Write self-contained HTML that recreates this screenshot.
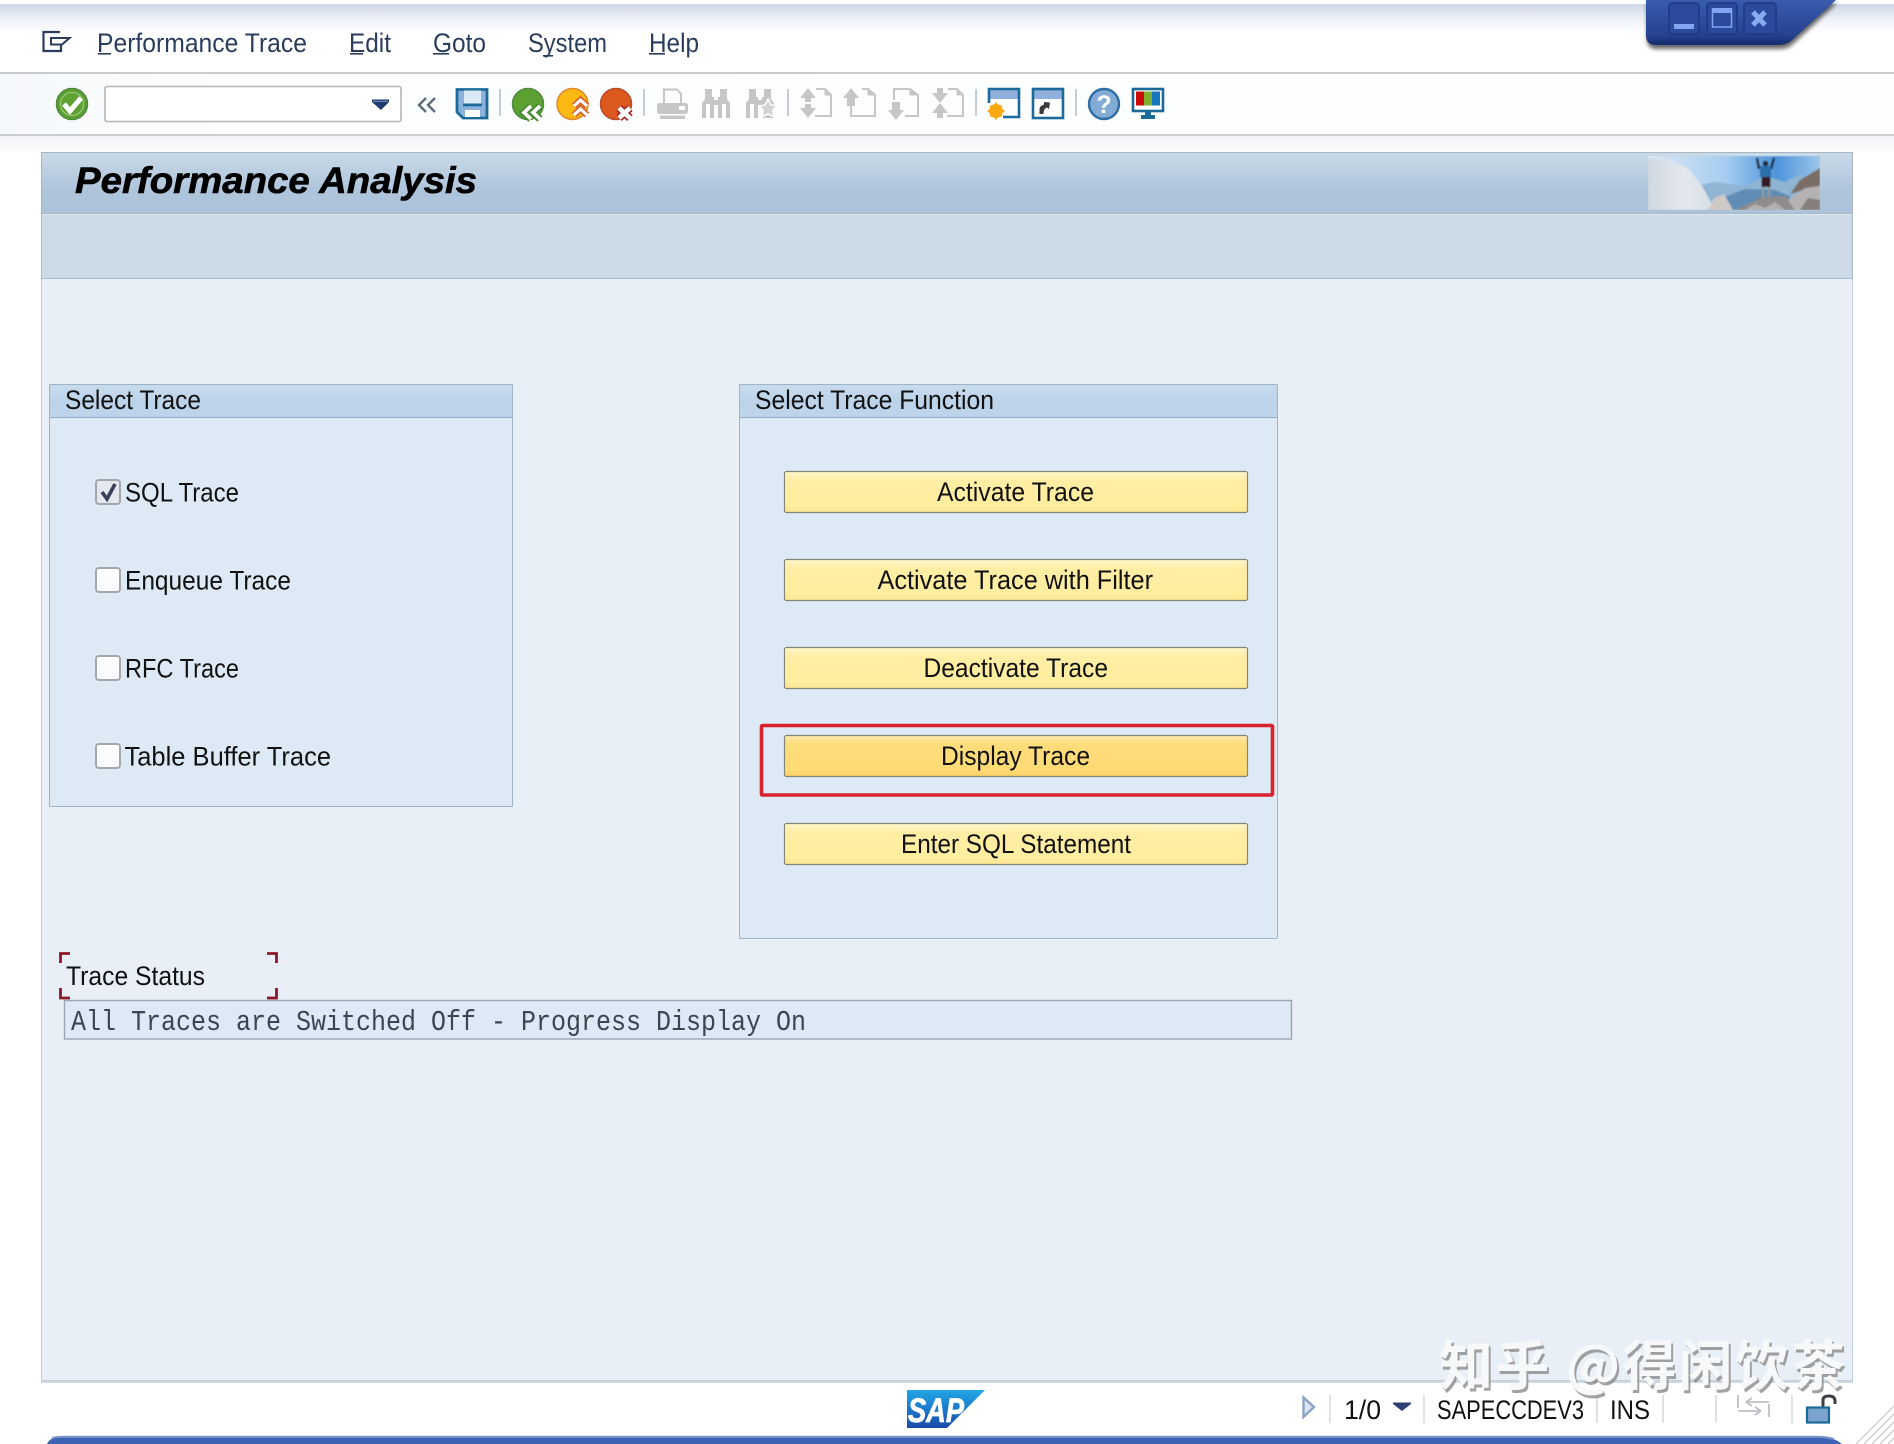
<!DOCTYPE html>
<html lang="en">
<head>
<meta charset="utf-8">
<title>Performance Analysis</title>
<style>
html,body{margin:0;padding:0;background:#fff;width:1894px;height:1444px;overflow:hidden}
svg{display:block}
text{font-family:"Liberation Sans","Noto Sans CJK SC",sans-serif;font-size:27px;fill:#111}
.m{fill:#2a3d5c}
.g{fill:#c6c6c6}
.gs{fill:none;stroke:#c6c6c6;stroke-width:2}
.bl{fill:none;stroke:#1c6a9a;stroke-width:2.6}
.sep{stroke:#c4ccd4;stroke-width:2}
</style>
</head>
<body>
<svg width="1894" height="1444" viewBox="0 0 1894 1444" xmlns="http://www.w3.org/2000/svg">
<defs>
<linearGradient id="top" x1="0" y1="0" x2="0" y2="1"><stop offset="0" stop-color="#cfd8e6"/><stop offset=".5" stop-color="#eef1f7"/><stop offset="1" stop-color="#fff"/></linearGradient>
<linearGradient id="tb" x1="0" y1="0" x2="1" y2="0"><stop offset="0" stop-color="#f5f8fb"/><stop offset=".12" stop-color="#fcfdfe"/><stop offset="1" stop-color="#fefefe"/></linearGradient>
<linearGradient id="gap" x1="0" y1="0" x2="0" y2="1"><stop offset="0" stop-color="#f2f4f8"/><stop offset="1" stop-color="#fbfcfd"/></linearGradient>
<linearGradient id="title" x1="0" y1="0" x2="0" y2="1"><stop offset="0" stop-color="#c9dae8"/><stop offset=".65" stop-color="#aec4db"/><stop offset="1" stop-color="#adc3da"/></linearGradient>
<linearGradient id="ph" x1="0" y1="0" x2="0" y2="1"><stop offset="0" stop-color="#c9dcee"/><stop offset=".5" stop-color="#bcd3e9"/><stop offset="1" stop-color="#bdd4ea"/></linearGradient>
<linearGradient id="btn" x1="0" y1="0" x2="0" y2="1"><stop offset="0" stop-color="#fff6cf"/><stop offset=".2" stop-color="#ffeea4"/><stop offset=".85" stop-color="#ffee9f"/><stop offset="1" stop-color="#fde690"/></linearGradient>
<linearGradient id="btn2" x1="0" y1="0" x2="0" y2="1"><stop offset="0" stop-color="#ffeab0"/><stop offset=".2" stop-color="#ffdd7c"/><stop offset=".85" stop-color="#ffdb74"/><stop offset="1" stop-color="#f9cf62"/></linearGradient>
<linearGradient id="navy" x1="0" y1="0" x2="0" y2="1"><stop offset="0" stop-color="#3a5cae"/><stop offset=".8" stop-color="#24418e"/><stop offset="1" stop-color="#132a6c"/></linearGradient>
<linearGradient id="sky" x1="0" y1="0" x2="1" y2="0"><stop offset="0" stop-color="#dce7f2"/><stop offset=".45" stop-color="#a6cdf1"/><stop offset=".75" stop-color="#4e95db"/><stop offset="1" stop-color="#9cc4e8"/></linearGradient>
<linearGradient id="sap" x1="0" y1="0" x2="0" y2="1"><stop offset="0" stop-color="#22a6e4"/><stop offset=".55" stop-color="#1a75c8"/><stop offset="1" stop-color="#1a4aa6"/></linearGradient>
<linearGradient id="chk" x1="0" y1="0" x2="0" y2="1"><stop offset="0" stop-color="#fff"/><stop offset="1" stop-color="#f6f8fb"/></linearGradient>
<linearGradient id="mt" x1="0" y1="0" x2="1" y2="0"><stop offset="0" stop-color="#d0d7e0"/><stop offset=".5" stop-color="#e3e8ee"/><stop offset="1" stop-color="#d4dbe3"/></linearGradient>
<clipPath id="scene"><rect x="1648" y="156" width="172" height="54"/></clipPath>
<filter id="bl" x="-5%" y="-5%" width="110%" height="110%"><feGaussianBlur stdDeviation=".8"/></filter>
<filter id="sh" x="-10%" y="-10%" width="120%" height="140%"><feGaussianBlur stdDeviation="2"/></filter>
</defs>

<!-- window background -->
<rect width="1894" height="1444" fill="#fff"/>
<rect x="0" y="4" width="1894" height="30" fill="url(#top)"/>
<rect x="0" y="0" width="1894" height="4" fill="#fff"/>
<rect x="0" y="74" width="1894" height="60" fill="url(#tb)"/>
<rect x="0" y="72" width="1894" height="2" fill="#c9cbcd"/>
<rect x="0" y="134" width="1894" height="2" fill="#cbcdd0"/>
<rect x="0" y="136" width="1894" height="16" fill="url(#gap)"/>

<!-- window buttons -->
<path d="M1646 0H1836L1792 41Q1788 45 1780 46H1656Q1646 46 1646 36Z" fill="#000" opacity=".6" filter="url(#sh)" transform="translate(1 3)"/>
<path d="M1646 0H1836L1792 40Q1788 44 1780 45H1656Q1646 45 1646 35Z" fill="url(#navy)"/>
<g fill="#2c4a9c" stroke="#1d3781" stroke-width="1.5">
<rect x="1669" y="3" width="30" height="31" rx="3"/>
<rect x="1707" y="3" width="30" height="31" rx="3"/>
<rect x="1744" y="3" width="32" height="31" rx="3"/>
</g>
<rect x="1674" y="24" width="20" height="5" fill="#7fa6ee"/>
<rect x="1712.5" y="9" width="19" height="18" fill="none" stroke="#7fa6ee" stroke-width="1.5"/>
<rect x="1712" y="8" width="20" height="5" fill="#7fa6ee"/>
<path d="M1753 12L1765 25M1765 12L1753 25" stroke="#86abf0" stroke-width="5"/>

<!-- menu -->
<path d="M60 32H43.5V51H61V45" fill="none" stroke="#2a3d5c" stroke-width="2.2"/>
<path d="M51 38H69.5L62 44.5H51Z" fill="none" stroke="#2a3d5c" stroke-width="2"/>
<text class="m" x="97" y="52" textLength="210" lengthAdjust="spacingAndGlyphs">Performance Trace</text>
<text class="m" x="349" y="52" textLength="42" lengthAdjust="spacingAndGlyphs">Edit</text>
<text class="m" x="433" y="52" textLength="53" lengthAdjust="spacingAndGlyphs">Goto</text>
<text class="m" x="528" y="52" textLength="79" lengthAdjust="spacingAndGlyphs">System</text>
<text class="m" x="649" y="52" textLength="50" lengthAdjust="spacingAndGlyphs">Help</text>
<g fill="#2a3d5c">
<rect x="98" y="53" width="13" height="1.6"/>
<rect x="350" y="53" width="13" height="1.6"/>
<rect x="433" y="53" width="16" height="1.6"/>
<rect x="543" y="55" width="10" height="1.6"/>
<rect x="649" y="53" width="16" height="1.6"/>
</g>

<!-- toolbar -->
<circle cx="72" cy="104" r="15.5" fill="#5da132" stroke="#4a8a35" stroke-width="1.5"/>
<circle cx="72" cy="104" r="11.5" fill="none" stroke="#a4cc86" stroke-width="1"/>
<path d="M64 104L70 111L81 98" fill="none" stroke="#fff" stroke-width="5"/>

<rect x="105" y="86.5" width="296" height="35" rx="2" fill="#fff" stroke="#b3b5b8" stroke-width="1.6"/>
<path d="M372 99.500H389V102L381 110L372 102Z" fill="#1f3a70"/>
<rect x="373" y="100.800" width="15" height="1.200" fill="#6f86ad"/>

<path d="M426 98L419 105L426 112M435 98L428 105L435 112" fill="none" stroke="#5e6b7a" stroke-width="2.4"/>

<!-- save -->
<path d="M457 89.5H487V118H463L457 112Z" fill="#8ab2da" stroke="#1c6a9a" stroke-width="2.8"/>
<rect x="464" y="90.500" width="17" height="13" fill="#dbe8f5"/>
<rect x="463" y="103.500" width="19" height="2.800" fill="#1c6a9a"/>
<rect x="465" y="110" width="15" height="7" fill="#fff"/>

<line class="sep" x1="500" y1="89" x2="500" y2="116"/>

<!-- back -->
<circle cx="528" cy="104" r="15.5" fill="#5da132" stroke="#4f8a3d" stroke-width="1.5"/>
<path d="M531 106L524 112.5L531 119M540 106L533 112.5L540 119" fill="none" stroke="#4a8a35" stroke-width="7.5"/>
<path d="M531 106L524 112.5L531 119M540 106L533 112.5L540 119" fill="none" stroke="#fff" stroke-width="3.6"/>
<!-- exit -->
<circle cx="572.5" cy="104" r="15.5" fill="#fdb913" stroke="#e0882a" stroke-width="1.5"/>
<path d="M574 106L580.500 100L587 106M574 115L580.500 109L587 115" fill="none" stroke="#d9602a" stroke-width="6.500"/>
<path d="M574 106L580.500 100L587 106M574 115L580.500 109L587 115" fill="none" stroke="#fff" stroke-width="3.200"/>
<!-- cancel -->
<circle cx="616" cy="104" r="15.5" fill="#dc5a1e" stroke="#b94a26" stroke-width="1.5"/>
<path d="M619 108L630 118M630 108L619 118" stroke="#a52a2a" stroke-width="8"/>
<path d="M619 108L630 118M630 108L619 118" stroke="#fff" stroke-width="4.6"/>

<line class="sep" x1="644" y1="89" x2="644" y2="116"/>

<!-- print -->
<path d="M664 104V89.500H677L681 94V104" class="gs"/>
<rect x="657" y="103" width="31" height="11" rx="2.500" class="g"/>
<rect x="679" y="106" width="6" height="4" fill="#fff"/>
<rect x="660" y="115.500" width="25" height="3.500" class="g"/>

<!-- binoculars -->
<path d="M705 89H712V97H714V100H718V97H720V89H727V99L730 103V118H718V105H714V118H702V103L705 99Z" class="g"/>
<rect x="706" y="104" width="4" height="14" fill="#fff"/>
<rect x="722" y="104" width="4" height="14" fill="#fff"/>
<path d="M749 89H756V97H758V100H762V97H764V89H771V99L774 103V118H762V105H758V118H746V103L749 99Z" class="g"/>
<rect x="750" y="104" width="4" height="14" fill="#fff"/>
<path d="M768 99L771 105L777 106L773 110L774 117L768 114L762 117L763 110L759 106L765 105Z" fill="#d4d4d4" stroke="#fff" stroke-width="1.500"/>

<line class="sep" x1="788" y1="89" x2="788" y2="116"/>

<!-- paging -->
<path d="M816 89H825L831 95V116H815" class="gs"/><path d="M825 89V95H831" fill="#c6c6c6" stroke="#c6c6c6"/>
<path d="M808 88L816 98H811V102H805V98H800ZM805 104H811V108H816L808 118L800 108H805Z" class="g"/>
<path d="M862 89H868L875 95V116H851V100" class="gs"/><path d="M868 89V95H875" fill="#c6c6c6" stroke="#c6c6c6"/>
<path d="M851 88L859 98H855V106H847V98H843Z" class="g"/>
<path d="M894 100V89H910L918 95V116H905" class="gs"/><path d="M910 89V95H918" fill="#c6c6c6" stroke="#c6c6c6"/>
<path d="M892 102H900V110H904L896 120L888 110H892Z" class="g"/>
<path d="M948 89H957L963 95V116H947" class="gs"/><path d="M957 89V95H963" fill="#c6c6c6" stroke="#c6c6c6"/>
<path d="M937 88H943V93H948L940 103L932 93H937ZM940 103L948 113H943V118H937V113H932Z" class="g"/>

<line class="sep" x1="976" y1="89" x2="976" y2="116"/>

<!-- window icons -->
<rect x="989" y="89" width="30" height="10" fill="#8fb0dc"/>
<path d="M989 103V89H1019V117H1003" class="bl"/>
<circle cx="996" cy="111" r="7" fill="#f9a90f"/>
<g stroke="#f9a90f" stroke-width="1.800"><path d="M996 102.500V119.500M987.500 111H1004.500M990.500 105.500L1001.500 116.500M1001.500 105.500L990.500 116.500"/></g>
<rect x="1033" y="89" width="30" height="10" fill="#8fb0dc"/>
<rect x="1033" y="89" width="30" height="29" class="bl"/>
<path d="M1039.500 114V109Q1039.500 106 1044 104.500V102L1050 102.500L1049 109L1047 107.500Q1043.500 108.500 1043.500 114Z" fill="#3a3a3a"/>

<line class="sep" x1="1076" y1="89" x2="1076" y2="116"/>

<!-- help -->
<circle cx="1104" cy="104" r="15" fill="#82abd5" stroke="#2f6da2" stroke-width="2.4"/>
<text x="1104" y="113" text-anchor="middle" style="font-size:25px;font-weight:bold;fill:#fff">?</text>

<!-- monitor -->
<rect x="1133" y="89" width="30" height="22" fill="#fff" stroke="#1c6a9a" stroke-width="2.6"/>
<rect x="1136" y="91.500" width="8" height="14" fill="#cc0c0c"/>
<rect x="1144" y="91.500" width="8" height="14" fill="#7eb02e"/>
<rect x="1152" y="91.500" width="8" height="14" fill="#1778c0"/>
<path d="M1145 112H1151V115H1155V119H1141V115H1145Z" fill="#1c6a9a"/>

<!-- main area -->
<rect x="41.500" y="152.500" width="1811" height="1228" fill="#e8eff7" stroke="#c1cdd9"/>
<rect x="41.500" y="152.500" width="1811" height="61" fill="url(#title)" stroke="#a9b6c2"/>
<rect x="41.500" y="213.500" width="1811" height="65" fill="#cddbe7" stroke="#a9b9c6"/>
<line x1="42" y1="214.500" x2="1852" y2="214.500" stroke="#dfe8f0"/>
<text x="75" y="193" textLength="402" lengthAdjust="spacingAndGlyphs" style="font-size:37px;font-weight:bold;font-style:italic;fill:#000;stroke:#000;stroke-width:.6">Performance Analysis</text>

<!-- scene -->
<g clip-path="url(#scene)"><g filter="url(#bl)">
<rect x="1648" y="156" width="172" height="54" fill="url(#sky)"/>
<path d="M1696 186L1715 182L1745 186L1765 176L1785 182L1800 174L1820 184V210H1696Z" fill="#8fb4d4"/>
<path d="M1722 198L1745 189L1775 190L1790 196V210H1722Z" fill="#5f8db3"/>
<path d="M1648 158L1668 160L1688 168L1702 186L1712 204L1722 210H1648Z" fill="url(#mt)"/>
<path d="M1708 210L1714 198L1724 194L1733 210Z" fill="#cfc9c6"/>
<path d="M1735 210L1750 203L1762 197L1785 196L1796 210Z" fill="#8f8b8a"/>
<path d="M1745 210L1755 204L1765 208L1775 202L1785 210Z" fill="#b3b0b0"/>
<path d="M1790 194L1800 180L1820 168V187L1800 191Z" fill="#7c6e66"/>
<path d="M1788 200L1805 188L1820 186V210H1795Z" fill="#b4b2b3"/>
<path d="M1800 210L1808 198L1820 200V210Z" fill="#857f7c"/>
<path d="M1759 169L1757 158M1771 169L1774 158" stroke="#1d2c3e" stroke-width="2.600"/>
<rect x="1760" y="166" width="11" height="11" fill="#2b70ad"/>
<rect x="1761.500" y="177" width="9" height="10" fill="#351a24"/>
<path d="M1763 187V197M1769 187V197" stroke="#8d9aa3" stroke-width="2.400"/>
<circle cx="1765.500" cy="163.500" r="2.800" fill="#1d2c3e"/>
</g></g>

<!-- Select Trace panel -->
<rect x="49.500" y="384.500" width="463" height="422" fill="#dde9f4" stroke="#9fb3c9" rx="1"/>
<rect x="50" y="385" width="462" height="32.500" fill="url(#ph)"/>
<line x1="50" y1="417.500" x2="512" y2="417.500" stroke="#92adc9"/>
<text x="65" y="409" textLength="136" lengthAdjust="spacingAndGlyphs">Select Trace</text>

<g fill="url(#chk)" stroke="#a4a6aa" stroke-width="2">
<rect x="96" y="480" width="24" height="24" rx="3" fill="#e4e9f1"/>
<rect x="96" y="568" width="24" height="24" rx="3"/>
<rect x="96" y="656" width="24" height="24" rx="3"/>
<rect x="96" y="744" width="24" height="24" rx="3"/>
</g>
<path d="M102 492L107 499L115 484" fill="none" stroke="#3b3f5c" stroke-width="3.600"/>

<text x="125" y="501.500" textLength="114" lengthAdjust="spacingAndGlyphs">SQL Trace</text>
<text x="125" y="589.500" textLength="166" lengthAdjust="spacingAndGlyphs">Enqueue Trace</text>
<text x="125" y="677.500" textLength="114" lengthAdjust="spacingAndGlyphs">RFC Trace</text>
<text x="124.500" y="765.500" textLength="206.500" lengthAdjust="spacingAndGlyphs">Table Buffer Trace</text>

<!-- Select Trace Function panel -->
<rect x="739.500" y="384.500" width="538" height="554" fill="#dde9f4" stroke="#9fb3c9" rx="1"/>
<rect x="740" y="385" width="537" height="32" fill="url(#ph)"/>
<line x1="740" y1="417.500" x2="1277" y2="417.500" stroke="#92adc9"/>
<text x="755" y="409" textLength="239" lengthAdjust="spacingAndGlyphs">Select Trace Function</text>

<g stroke="#85857a" stroke-width="1.2">
<rect x="784.500" y="471.500" width="463" height="41" rx="2" fill="url(#btn)"/>
<rect x="784.500" y="559.500" width="463" height="41" rx="2" fill="url(#btn)"/>
<rect x="784.500" y="647.500" width="463" height="41" rx="2" fill="url(#btn)"/>
<rect x="784.500" y="735.500" width="463" height="41" rx="2" fill="url(#btn2)"/>
<rect x="784.500" y="823.500" width="463" height="41" rx="2" fill="url(#btn)"/>
</g>
<text x="937" y="501" textLength="157" lengthAdjust="spacingAndGlyphs">Activate Trace</text>
<text x="877.500" y="589" textLength="275.500" lengthAdjust="spacingAndGlyphs">Activate Trace with Filter</text>
<text x="923.500" y="677" textLength="184.500" lengthAdjust="spacingAndGlyphs">Deactivate Trace</text>
<text x="941" y="765" textLength="149" lengthAdjust="spacingAndGlyphs">Display Trace</text>
<text x="901" y="853" textLength="230" lengthAdjust="spacingAndGlyphs">Enter SQL Statement</text>

<rect x="761.500" y="725.500" width="511" height="69.500" fill="none" stroke="#d8232f" stroke-width="3.600" rx="1"/>

<!-- Trace status -->
<g fill="none" stroke="#8b1a28" stroke-width="2.800">
<path d="M70 953.500H60.500V963"/>
<path d="M267 953.500H276.500V963"/>
<path d="M70 998H60.500V988"/>
<path d="M267 998H276.500V988"/>
</g>
<text x="66" y="985" textLength="139" lengthAdjust="spacingAndGlyphs">Trace Status</text>
<rect x="64.500" y="1000.500" width="1227" height="38.500" fill="#dde9f4" stroke="#9aa6b2" stroke-width="1.400"/>
<text x="71" y="1030" textLength="735" lengthAdjust="spacingAndGlyphs" style="font-family:'Liberation Mono','Liberation Serif',monospace;font-size:29px;fill:#3c4650">All Traces are Switched Off - Progress Display On</text>

<!-- status bar -->
<rect x="41" y="1381" width="1812" height="2" fill="#d3d8df"/>
<path d="M907 1390H985L947 1428H907Z" fill="url(#sap)"/>
<text x="908" y="1422" textLength="56" lengthAdjust="spacingAndGlyphs" style="font-size:34px;font-weight:bold;font-style:italic;fill:#fff;stroke:#fff;stroke-width:.8">SAP</text>

<path d="M1303.500 1397.500L1314 1407L1303.500 1417Z" fill="#dce6f2" stroke="#8ba5c6" stroke-width="2.400"/>
<g stroke="#d4d8dc" stroke-width="1.500">
<line x1="1330" y1="1395" x2="1330" y2="1423"/>
<line x1="1424" y1="1395" x2="1424" y2="1423"/>
<line x1="1597" y1="1395" x2="1597" y2="1423"/>
<line x1="1663" y1="1395" x2="1663" y2="1423"/>
<line x1="1716" y1="1395" x2="1716" y2="1423"/>
<line x1="1792" y1="1395" x2="1792" y2="1423"/>
</g>
<text x="1344" y="1419" textLength="37" lengthAdjust="spacingAndGlyphs">1/0</text>
<path d="M1393 1402.500H1411V1404L1402 1411L1393 1404Z" fill="#2c4172"/>
<text x="1437" y="1419" textLength="147" lengthAdjust="spacingAndGlyphs">SAPECCDEV3</text>
<text x="1610" y="1419" textLength="40" lengthAdjust="spacingAndGlyphs">INS</text>

<path d="M1738 1395V1408M1746 1402H1769M1746 1402L1752 1398M1746 1402L1752 1406" fill="none" stroke="#bdc1c5" stroke-width="1.800"/>
<path d="M1769 1404V1417M1738 1411H1761M1761 1411L1755 1407M1761 1411L1755 1415" fill="none" stroke="#bdc1c5" stroke-width="1.800"/>

<path d="M1823 1407V1400Q1823 1396 1829 1396Q1835 1396 1835 1401V1404" fill="none" stroke="#3b3f46" stroke-width="3"/>
<rect x="1807" y="1407.500" width="22" height="15" fill="#7ba4cc" stroke="#1c6a9a" stroke-width="2.200"/>

<!-- grip -->
<g stroke="#cdd0d5" stroke-width="1.400">
<path d="M1856 1444L1894 1406M1864 1444L1894 1414M1872 1444L1894 1422M1880 1444L1894 1430M1888 1444L1894 1438"/>
</g>

<!-- bottom band -->
<path d="M47 1444Q50 1436 66 1436H1816Q1832 1436 1842 1444Z" fill="#3d63b4"/>
<path d="M52 1438Q56 1436.800 66 1436.800H1816Q1826 1436.800 1834 1439" fill="none" stroke="#7e95cb" stroke-width="2"/>

<!-- watermark -->
<text x="1439" y="1385" textLength="406" style="font-family:'Noto Sans CJK SC','WenQuanYi Zen Hei',sans-serif;font-size:54px;font-weight:bold;fill:#8c8c8c;opacity:.8" transform="translate(2 3)">知乎 @得闲饮茶</text>
<text x="1439" y="1385" textLength="406" style="font-family:'Noto Sans CJK SC','WenQuanYi Zen Hei',sans-serif;font-size:54px;font-weight:bold;fill:#f7f8fa">知乎 @得闲饮茶</text>
</svg>
</body>
</html>
